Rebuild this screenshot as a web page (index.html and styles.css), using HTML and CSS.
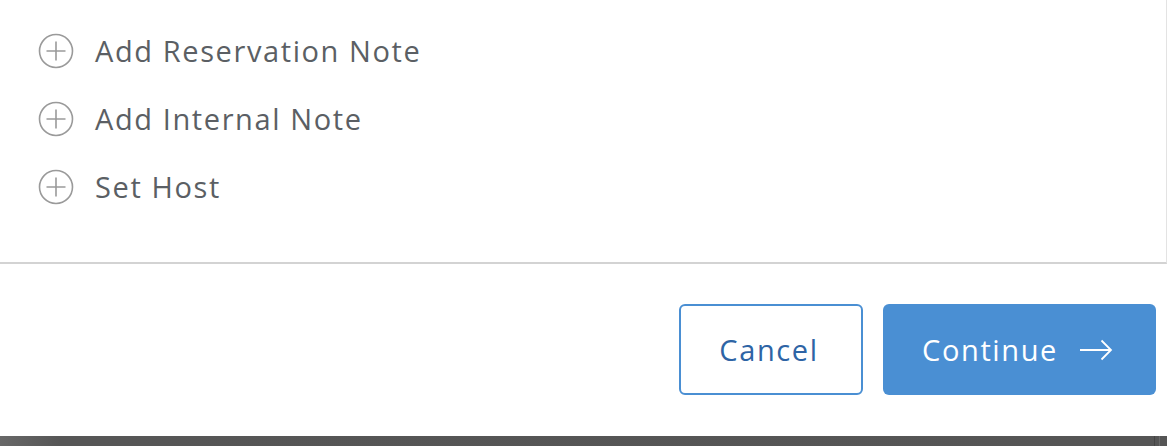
FILE: index.html
```html
<!DOCTYPE html>
<html lang="en">
<head>
<meta charset="utf-8">
<title>Reservation options</title>
<link rel="stylesheet" href="styles.css">
</head>
<body>
<div class="modal">
  <section class="options">
    <button class="option" type="button">
      <svg class="plus" viewBox="0 0 36 36" aria-hidden="true"><circle cx="18" cy="18" r="16.5"/><path d="M18 8.5v19M8.5 18h19"/></svg>
      <span>Add Reservation Note</span>
    </button>
    <button class="option" type="button">
      <svg class="plus" viewBox="0 0 36 36" aria-hidden="true"><circle cx="18" cy="18" r="16.5"/><path d="M18 8.5v19M8.5 18h19"/></svg>
      <span>Add Internal Note</span>
    </button>
    <button class="option" type="button">
      <svg class="plus" viewBox="0 0 36 36" aria-hidden="true"><circle cx="18" cy="18" r="16.5"/><path d="M18 8.5v19M8.5 18h19"/></svg>
      <span>Set Host</span>
    </button>
  </section>
  <footer class="actions">
    <button class="btn btn-outline" type="button">Cancel</button>
    <button class="btn btn-primary" type="button">Continue
      <svg class="arrow" viewBox="0 0 34 22" aria-hidden="true"><path d="M1 11h31M22.5 1.5L32 11l-9.5 9.5"/></svg>
    </button>
  </footer>
</div>
<div class="backdrop-bar"><span class="grip"></span></div>
</body>
</html>
```
FILE: styles.css
```css
* { box-sizing: border-box; }
html, body { margin: 0; padding: 0; }
body {
  width: 1167px;
  height: 446px;
  overflow: hidden;
  background: #fff;
  font-family: "Open Sans", "Noto Sans", sans-serif;
  display: flex;
  flex-direction: column;
}
.modal {
  height: 436px;
  display: flex;
  flex-direction: column;
  background: #fff;
}
.options {
  height: 264px;
  padding: 17px 0 0 38px;
  border-right: 1px solid #e3e3e3;
  border-bottom: 2px solid #d3d3d3;
  display: flex;
  flex-direction: column;
}
.option {
  height: 68px;
  display: flex;
  align-items: center;
  gap: 21px;
  background: none;
  border: 0;
  padding: 0;
  font: inherit;
  font-size: 29px;
  color: #5b5f64;
  cursor: pointer;
  text-align: left;
  letter-spacing: 1.6px;
}
.option span {
  padding-bottom: 2px;
}
.plus {
  width: 36px;
  height: 36px;
  flex: none;
  fill: none;
  stroke: #9a9a9a;
  stroke-width: 1.6;
}
.actions {
  flex: 1;
  display: flex;
  justify-content: flex-end;
  align-items: flex-start;
  gap: 20px;
  padding: 40px 11px 0 0;
}
.btn {
  height: 91px;
  border-radius: 6px;
  font: inherit;
  font-size: 29px;
  display: flex;
  align-items: center;
  justify-content: center;
  cursor: pointer;
  letter-spacing: 1.6px;
}
.btn-outline {
  width: 184px;
  background: #fff;
  border: 2px solid #4a8fd3;
  color: #2e64a5;
  padding-left: 2px;
}
.btn-primary {
  width: 273px;
  background: #4a8fd3;
  border: 0;
  color: #fff;
  gap: 21px;
  padding-left: 2px;
}
.arrow {
  width: 34px;
  height: 22px;
  fill: none;
  stroke: #fff;
  stroke-width: 1.8;
}
.backdrop-bar {
  height: 10px;
  background: linear-gradient(90deg, #686868 0, #565656 60px, #555 100%);
  display: flex;
  justify-content: flex-end;
  padding-right: 7px;
}
.grip {
  width: 6px;
  height: 10px;
  border-left: 1px solid #444;
  border-right: 1px solid #6a6a6a;
}
```
